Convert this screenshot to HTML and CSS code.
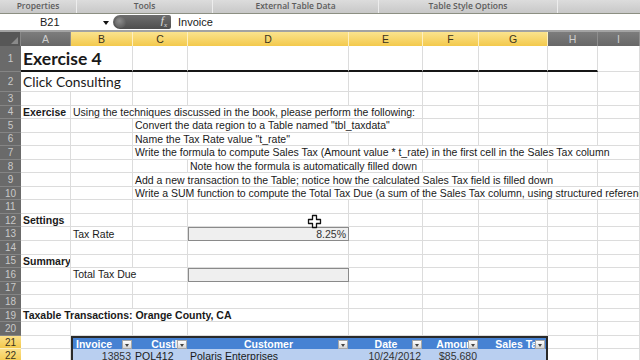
FILE: index.html
```html
<!DOCTYPE html>
<html lang="en">
<head>
  <meta charset="UTF-8">
  <title>Exercise 4 - Click Consulting</title>
  <link rel="stylesheet" href="styles.css">
</head>
<body>
  <!-- ribbon group captions -->
  <div class="ribbon-groups">
    <div class="group g1">Properties</div>
    <div class="group g2">Tools</div>
    <div class="group g3">External Table Data</div>
    <div class="group g4">Table Style Options</div>
    <div class="group g5"></div>
  </div>

  <!-- name box + formula -->
  <div class="formula-bar">
    <div class="name-box">B21<span class="caret"></span></div>
    <div class="fx-pill"><span class="knob"></span><span class="fx">f<sub>x</sub></span></div>
    <div class="formula">Invoice</div>
  </div>

  <div class="sheet">
    <div class="row heads">
      <div class="corner"><span></span></div>
      <div class="ch">A</div>
      <div class="ch sel">B</div>
      <div class="ch sel">C</div>
      <div class="ch sel">D</div>
      <div class="ch sel">E</div>
      <div class="ch sel">F</div>
      <div class="ch sel">G</div>
      <div class="ch">H</div>
      <div class="ch">I</div>
    </div>

    <div class="row r1">
      <div class="rh">1</div>
      <div class="c s2 title">Exercise 4</div>
      <div class="c"></div><div class="c"></div><div class="c"></div><div class="c"></div>
      <div class="c"></div><div class="c"></div><div class="c last"></div>
    </div>

    <div class="row r2">
      <div class="rh">2</div>
      <div class="c s2 subtitle">Click Consulting</div>
      <div class="c"></div><div class="c"></div><div class="c"></div><div class="c"></div>
      <div class="c"></div><div class="c"></div><div class="c"></div>
    </div>

    <div class="row">
      <div class="rh">3</div>
      <div class="c"></div><div class="c"></div><div class="c"></div><div class="c"></div><div class="c"></div>
      <div class="c"></div><div class="c"></div><div class="c"></div><div class="c"></div>
    </div>

    <div class="row">
      <div class="rh">4</div>
      <div class="c b">Exercise</div>
      <div class="c s4">Using the techniques discussed in the book, please perform the following:</div>
      <div class="c"></div><div class="c"></div><div class="c"></div><div class="c"></div>
    </div>

    <div class="row">
      <div class="rh">5</div>
      <div class="c"></div><div class="c"></div>
      <div class="c s3">Convert the data region to a Table named "tbl_taxdata"</div>
      <div class="c"></div><div class="c"></div><div class="c"></div><div class="c"></div>
    </div>

    <div class="row">
      <div class="rh">6</div>
      <div class="c"></div><div class="c"></div>
      <div class="c s2">Name the Tax Rate value "t_rate"</div>
      <div class="c"></div><div class="c"></div><div class="c"></div><div class="c"></div><div class="c"></div>
    </div>

    <div class="row">
      <div class="rh">7</div>
      <div class="c"></div><div class="c"></div>
      <div class="c s7">Write the formula to compute Sales Tax (Amount value * t_rate) in the first cell in the Sales Tax column</div>
    </div>

    <div class="row">
      <div class="rh">8</div>
      <div class="c"></div><div class="c"></div><div class="c"></div>
      <div class="c s2">Note how the formula is automatically filled down</div>
      <div class="c"></div><div class="c"></div><div class="c"></div><div class="c"></div>
    </div>

    <div class="row">
      <div class="rh">9</div>
      <div class="c"></div><div class="c"></div>
      <div class="c s6">Add a new transaction to the Table; notice how the calculated Sales Tax field is filled down</div>
      <div class="c"></div>
    </div>

    <div class="row">
      <div class="rh">10</div>
      <div class="c"></div><div class="c"></div>
      <div class="c s7">Write a SUM function to compute the Total Tax Due (a sum of the Sales Tax column, using structured references)</div>
    </div>

    <div class="row">
      <div class="rh">11</div>
      <div class="c"></div><div class="c"></div><div class="c"></div><div class="c"></div><div class="c"></div>
      <div class="c"></div><div class="c"></div><div class="c"></div><div class="c"></div>
    </div>

    <div class="row">
      <div class="rh">12</div>
      <div class="c b">Settings</div>
      <div class="c"></div><div class="c"></div><div class="c"></div><div class="c"></div>
      <div class="c"></div><div class="c"></div><div class="c"></div><div class="c"></div>
    </div>

    <div class="row">
      <div class="rh">13</div>
      <div class="c"></div>
      <div class="c">Tax Rate</div>
      <div class="c"></div>
      <div class="c input num">8.25%</div>
      <div class="c"></div><div class="c"></div><div class="c"></div><div class="c"></div><div class="c"></div>
    </div>

    <div class="row">
      <div class="rh">14</div>
      <div class="c"></div><div class="c"></div><div class="c"></div><div class="c"></div><div class="c"></div>
      <div class="c"></div><div class="c"></div><div class="c"></div><div class="c"></div>
    </div>

    <div class="row">
      <div class="rh">15</div>
      <div class="c b">Summary</div>
      <div class="c"></div><div class="c"></div><div class="c"></div><div class="c"></div>
      <div class="c"></div><div class="c"></div><div class="c"></div><div class="c"></div>
    </div>

    <div class="row">
      <div class="rh">16</div>
      <div class="c"></div>
      <div class="c s2">Total Tax Due</div>
      <div class="c input"></div>
      <div class="c"></div><div class="c"></div><div class="c"></div><div class="c"></div><div class="c"></div>
    </div>

    <div class="row">
      <div class="rh">17</div>
      <div class="c"></div><div class="c"></div><div class="c"></div><div class="c"></div><div class="c"></div>
      <div class="c"></div><div class="c"></div><div class="c"></div><div class="c"></div>
    </div>

    <div class="row">
      <div class="rh">18</div>
      <div class="c"></div><div class="c"></div><div class="c"></div><div class="c"></div><div class="c"></div>
      <div class="c"></div><div class="c"></div><div class="c"></div><div class="c"></div>
    </div>

    <div class="row">
      <div class="rh">19</div>
      <div class="c s4 b">Taxable Transactions: Orange County, CA</div>
      <div class="c"></div><div class="c"></div><div class="c"></div><div class="c"></div><div class="c"></div>
    </div>

    <div class="row">
      <div class="rh">20</div>
      <div class="c"></div><div class="c"></div><div class="c"></div><div class="c"></div><div class="c"></div>
      <div class="c"></div><div class="c"></div><div class="c"></div><div class="c"></div>
    </div>

    <div class="row">
      <div class="rh sel">21</div>
      <div class="c"></div>
      <div class="th first left">Invoice<span class="filter"></span></div>
      <div class="th right">CustID<span class="filter"></span></div>
      <div class="th">Customer<span class="filter"></span></div>
      <div class="th">Date<span class="filter"></span></div>
      <div class="th right">Amount<span class="filter"></span></div>
      <div class="th right lastcol">Sales Tax<span class="filter"></span></div>
      <div class="c"></div><div class="c"></div>
    </div>

    <div class="row">
      <div class="rh sel">22</div>
      <div class="c"></div>
      <div class="td first num">13853</div>
      <div class="td">POL412</div>
      <div class="td">Polaris Enterprises</div>
      <div class="td num">10/24/2012</div>
      <div class="td num">$85,680</div>
      <div class="td lastcol"></div>
      <div class="c"></div><div class="c"></div>
    </div>
  </div>

  <!-- mouse pointer over the sheet -->
  <svg class="pointer" width="16" height="16" viewBox="0 0 16 16">
    <path d="M5.5 1.5h4v4h4v4h-4v4h-4v-4h-4v-4h4z" fill="#fff" stroke="#111" stroke-width="1.3" stroke-linejoin="round"/>
  </svg>
</body>
</html>
```

FILE: styles.css
```css
* {
  box-sizing: border-box;
}

body {
  margin: 0;
  width: 640px;
  height: 360px;
  overflow: hidden;
  position: relative;
  background-color: #fff;
  font-family: "Liberation Sans", Arial, sans-serif;
  color: #1a1a1a;
}

/* ribbon captions */
.ribbon-groups {
  display: flex;
  height: 14px;
  background: linear-gradient(#dcdcdc, #c8c8c8);
  border-bottom: 1px solid #8c8f82;
}

.group {
  border-right: 1px solid #ededed;
  font-family: "Open Sans", sans-serif;
  font-size: 8.5px;
  font-weight: 600;
  color: #5c5c5c;
  text-align: center;
  line-height: 11px;
  white-space: nowrap;
}

.g1 { width: 77px; }
.g2 { width: 136px; }
.g3 { width: 166px; }
.g4 { width: 179px; }
.g5 { flex: 1; border-right: none; }

/* formula bar */
.formula-bar {
  display: flex;
  align-items: center;
  height: 18px;
  border-bottom: 2px solid #a3a3a3;
  font-size: 11px;
}

.name-box {
  position: relative;
  width: 113px;
  padding-left: 40px;
}

.caret {
  position: absolute;
  right: 4px;
  top: 5px;
  border-left: 3px solid transparent;
  border-right: 3px solid transparent;
  border-top: 4px solid #111;
}

.fx-pill {
  display: flex;
  align-items: center;
  justify-content: space-between;
  width: 58px;
  height: 14px;
  padding: 0 4px 0 2px;
  border-radius: 7px 2px 2px 7px;
  background: linear-gradient(#6e6e6e, #4e4e4e);
}

.knob {
  width: 11px;
  height: 11px;
  border-radius: 50%;
  background: radial-gradient(circle at 40% 35%, #8d8d8d, #4d4d4d);
}

.fx {
  font-family: "Liberation Serif", serif;
  font-style: italic;
  font-size: 11px;
  color: #e2e2e2;
}

.fx sub {
  font-size: 7px;
}

.formula {
  padding-left: 7px;
}

/* grid */
.row {
  display: grid;
  grid-template-columns: 21px 50px 62px 55px 161px 74px 56px 69px 50px 42px;
  height: 13.56px;
  font-size: 10.5px;
}

.row.heads {
  height: 14px;
}

.row.r1 {
  height: 26px;
}

.row.r2 {
  height: 20px;
}

.corner {
  position: relative;
  background: #575757;
  border-right: 1px solid #888;
}

.corner span {
  position: absolute;
  right: 2px;
  bottom: 2px;
  border-left: 7px solid transparent;
  border-bottom: 7px solid #8a8a8a;
}

.ch {
  display: flex;
  align-items: center;
  justify-content: center;
  background: linear-gradient(#7c7c7c, #676767);
  border-right: 1px solid #8e8e8e;
  color: #cfcfcf;
  font-size: 10.5px;
}

.ch.sel {
  background: linear-gradient(#fbe38e, #f3c94c);
  border-right: 1px solid #fdf0c0;
  color: #3a3320;
}

.rh {
  display: flex;
  align-items: center;
  justify-content: center;
  background: #6a6a6a;
  border-bottom: 1px solid #858585;
  color: #c9c9c9;
  font-size: 10px;
}

.rh.sel {
  background: linear-gradient(#fbe08a, #f3c94c);
  border-bottom: 1px solid #fdf0c0;
  color: #3a3320;
}

.c {
  display: flex;
  align-items: center;
  padding-left: 2px;
  border-right: 1px solid #dcdcdc;
  border-bottom: 1px solid #dcdcdc;
  white-space: nowrap;
  overflow: hidden;
}

.s2 { grid-column: span 2; }
.s3 { grid-column: span 3; }
.s4 { grid-column: span 4; }
.s6 { grid-column: span 6; }
.s7 { grid-column: span 7; }

.b {
  font-weight: bold;
}

.r1 .c {
  align-items: flex-end;
  border-bottom: 2px solid #161616;
}

.r1 .c.last {
  border-bottom: 1px solid #dcdcdc;
}

.title {
  font-family: Lato, sans-serif;
  font-weight: bold;
  font-size: 17.5px;
  padding-bottom: 1px;
}

.subtitle {
  font-family: Lato, sans-serif;
  font-size: 13.8px;
}

.input {
  background: #efefef;
  border: 1px solid #8a8a8a;
}

.num {
  justify-content: flex-end;
  padding-right: 2px;
  color: #333;
}

/* table */
.th {
  position: relative;
  display: flex;
  align-items: center;
  justify-content: center;
  padding: 0 3px;
  background: #4682d3;
  border-top: 2px solid #2a2a2a;
  color: #fff;
  font-weight: bold;
  white-space: nowrap;
  overflow: hidden;
}

.th.left {
  justify-content: flex-start;
}

.th.right {
  justify-content: flex-end;
}

.filter {
  position: absolute;
  right: 1px;
  top: 2px;
  width: 10px;
  height: 9px;
  background: linear-gradient(#ffffff, #d6d6d6);
  border: 1px solid #a7a7a7;
}

.filter::after {
  content: "";
  position: absolute;
  left: 2px;
  top: 3px;
  border-left: 2.5px solid transparent;
  border-right: 2.5px solid transparent;
  border-top: 3px solid #444;
}

.td {
  display: flex;
  align-items: center;
  padding-left: 2px;
  background: #b9cff0;
  border-bottom: 1px solid #9fb8e0;
  white-space: nowrap;
  overflow: hidden;
}

.first {
  border-left: 2px solid #2a2a2a;
}

.lastcol {
  border-right: 2px solid #2a2a2a;
}

.pointer {
  position: absolute;
  left: 307px;
  top: 214px;
}
```
